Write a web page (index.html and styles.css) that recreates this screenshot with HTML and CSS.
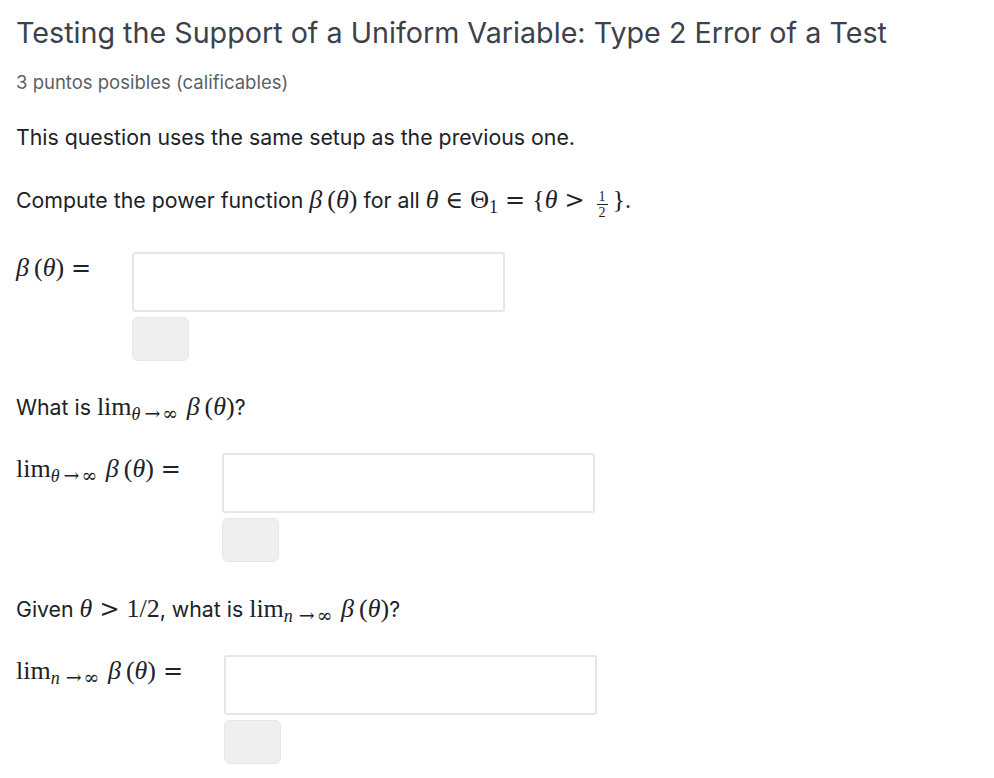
FILE: index.html
```html
<!DOCTYPE html>
<html>
<head>
<meta charset="utf-8">
<link rel="stylesheet" href="styles.css">
</head>
<body>
<div class="page">
  <h1 class="title">Testing the Support of a Uniform Variable: Type 2 Error of a Test</h1>
  <div class="points">3 puntos posibles (calificables)</div>

  <p class="para intro">This question uses the same setup as the previous one.</p>

  <p class="para q1">Compute the power function <span class="m"><i>β</i><span class="th">(<i>θ</i>)</span></span> for all <span class="m"><i>θ</i><span class="rel">∈</span>Θ<sub class="s1">1</sub><span class="rel">=</span>{<i>θ</i><span class="rel">&gt;</span><span class="frac"><span class="num">1</span><span class="den">2</span></span>}</span>.</p>

  <div class="row r1">
    <div class="label m"><i>β</i><span class="th">(<i>θ</i>)</span><span class="rel">=</span></div>
    <div class="answer">
      <input class="box" type="text">
      <button class="btn" type="button"></button>
    </div>
  </div>

  <p class="para q2">What is <span class="m">lim<sub><i>θ</i><span class="sym">→∞</span></sub> <i>β</i><span class="th">(<i>θ</i>)</span></span>?</p>

  <div class="row r2">
    <div class="label m">lim<sub><i>θ</i><span class="sym">→∞</span></sub> <i>β</i><span class="th">(<i>θ</i>)</span><span class="rel">=</span></div>
    <div class="answer">
      <input class="box" type="text">
      <button class="btn" type="button"></button>
    </div>
  </div>

  <p class="para q3">Given <span class="m"><i>θ</i><span class="rel">&gt;</span>1/2</span>, what is <span class="m">lim<sub><i class="n">n</i><span class="sym">→∞</span></sub> <i>β</i><span class="th">(<i>θ</i>)</span></span>?</p>

  <div class="row r3">
    <div class="label m">lim<sub><i class="n">n</i><span class="sym">→∞</span></sub> <i>β</i><span class="th">(<i>θ</i>)</span><span class="rel">=</span></div>
    <div class="answer">
      <input class="box" type="text">
      <button class="btn" type="button"></button>
    </div>
  </div>
</div>
</body>
</html>
```

FILE: styles.css
```css
html, body {
  margin: 0;
  padding: 0;
  background: #ffffff;
}

.page {
  padding: 16px 0 0 16px;
  font-family: Inter, "Noto Sans", sans-serif;
  color: #202226;
}

.title {
  margin: 0;
  font-size: 28.7px;
  line-height: 34px;
  font-weight: 400;
  color: #3c424c;
}

.points {
  margin-top: 20px;
  font-size: 18.5px;
  line-height: 24px;
  color: #5c5f66;
}

.para {
  margin: 0;
  font-size: 21.3px;
  line-height: 26px;
}

.intro { margin-top: 30px; }
.q1 { margin-top: 37px; }
.q2 { margin-top: 33px; }
.q3 { margin-top: 34px; }

.m {
  font-family: "Liberation Serif", "DejaVu Serif", serif;
  font-size: 26px;
  line-height: 20px;
  white-space: nowrap;
}

.m i {
  font-style: italic;
}

.m i.n {
  margin-right: 2px;
}

.th {
  margin-left: 5px;
}

.rel {
  font-family: "DejaVu Serif", serif;
  font-size: 24px;
  margin: 0 7px;
}

.m sub {
  font-size: 18px;
  line-height: 0;
  vertical-align: -5px;
}

.sym {
  font-family: "DejaVu Serif", serif;
  font-size: 19px;
  letter-spacing: 2px;
  margin-left: 4px;
}

.frac {
  display: inline-block;
  vertical-align: -9px;
  margin: -8px 5px;
  font-size: 14px;
  line-height: 15px;
  text-align: center;
}

.frac .num,
.frac .den {
  display: block;
  padding: 0 2px;
}

.frac .den {
  border-top: 1px solid #202226;
}

.row {
  display: flex;
  align-items: flex-start;
  gap: 34px;
}

.r1 { margin-top: 39px; }
.r2 { margin-top: 33px; }
.r3 { margin-top: 33px; }

.label {
  padding-top: 3px;
  line-height: 26px;
}

.answer {
  display: flex;
  flex-direction: column;
  align-items: flex-start;
  gap: 5px;
}

.box {
  box-sizing: border-box;
  width: 373px;
  height: 60px;
  margin: 0;
  border: 2px solid #e6e6e6;
  border-radius: 3px;
  background: #ffffff;
}

.btn {
  box-sizing: border-box;
  width: 57px;
  height: 44px;
  margin: 0;
  padding: 0;
  border: 1px solid #e6e6e6;
  border-radius: 6px;
  background: #efefef;
}
```
